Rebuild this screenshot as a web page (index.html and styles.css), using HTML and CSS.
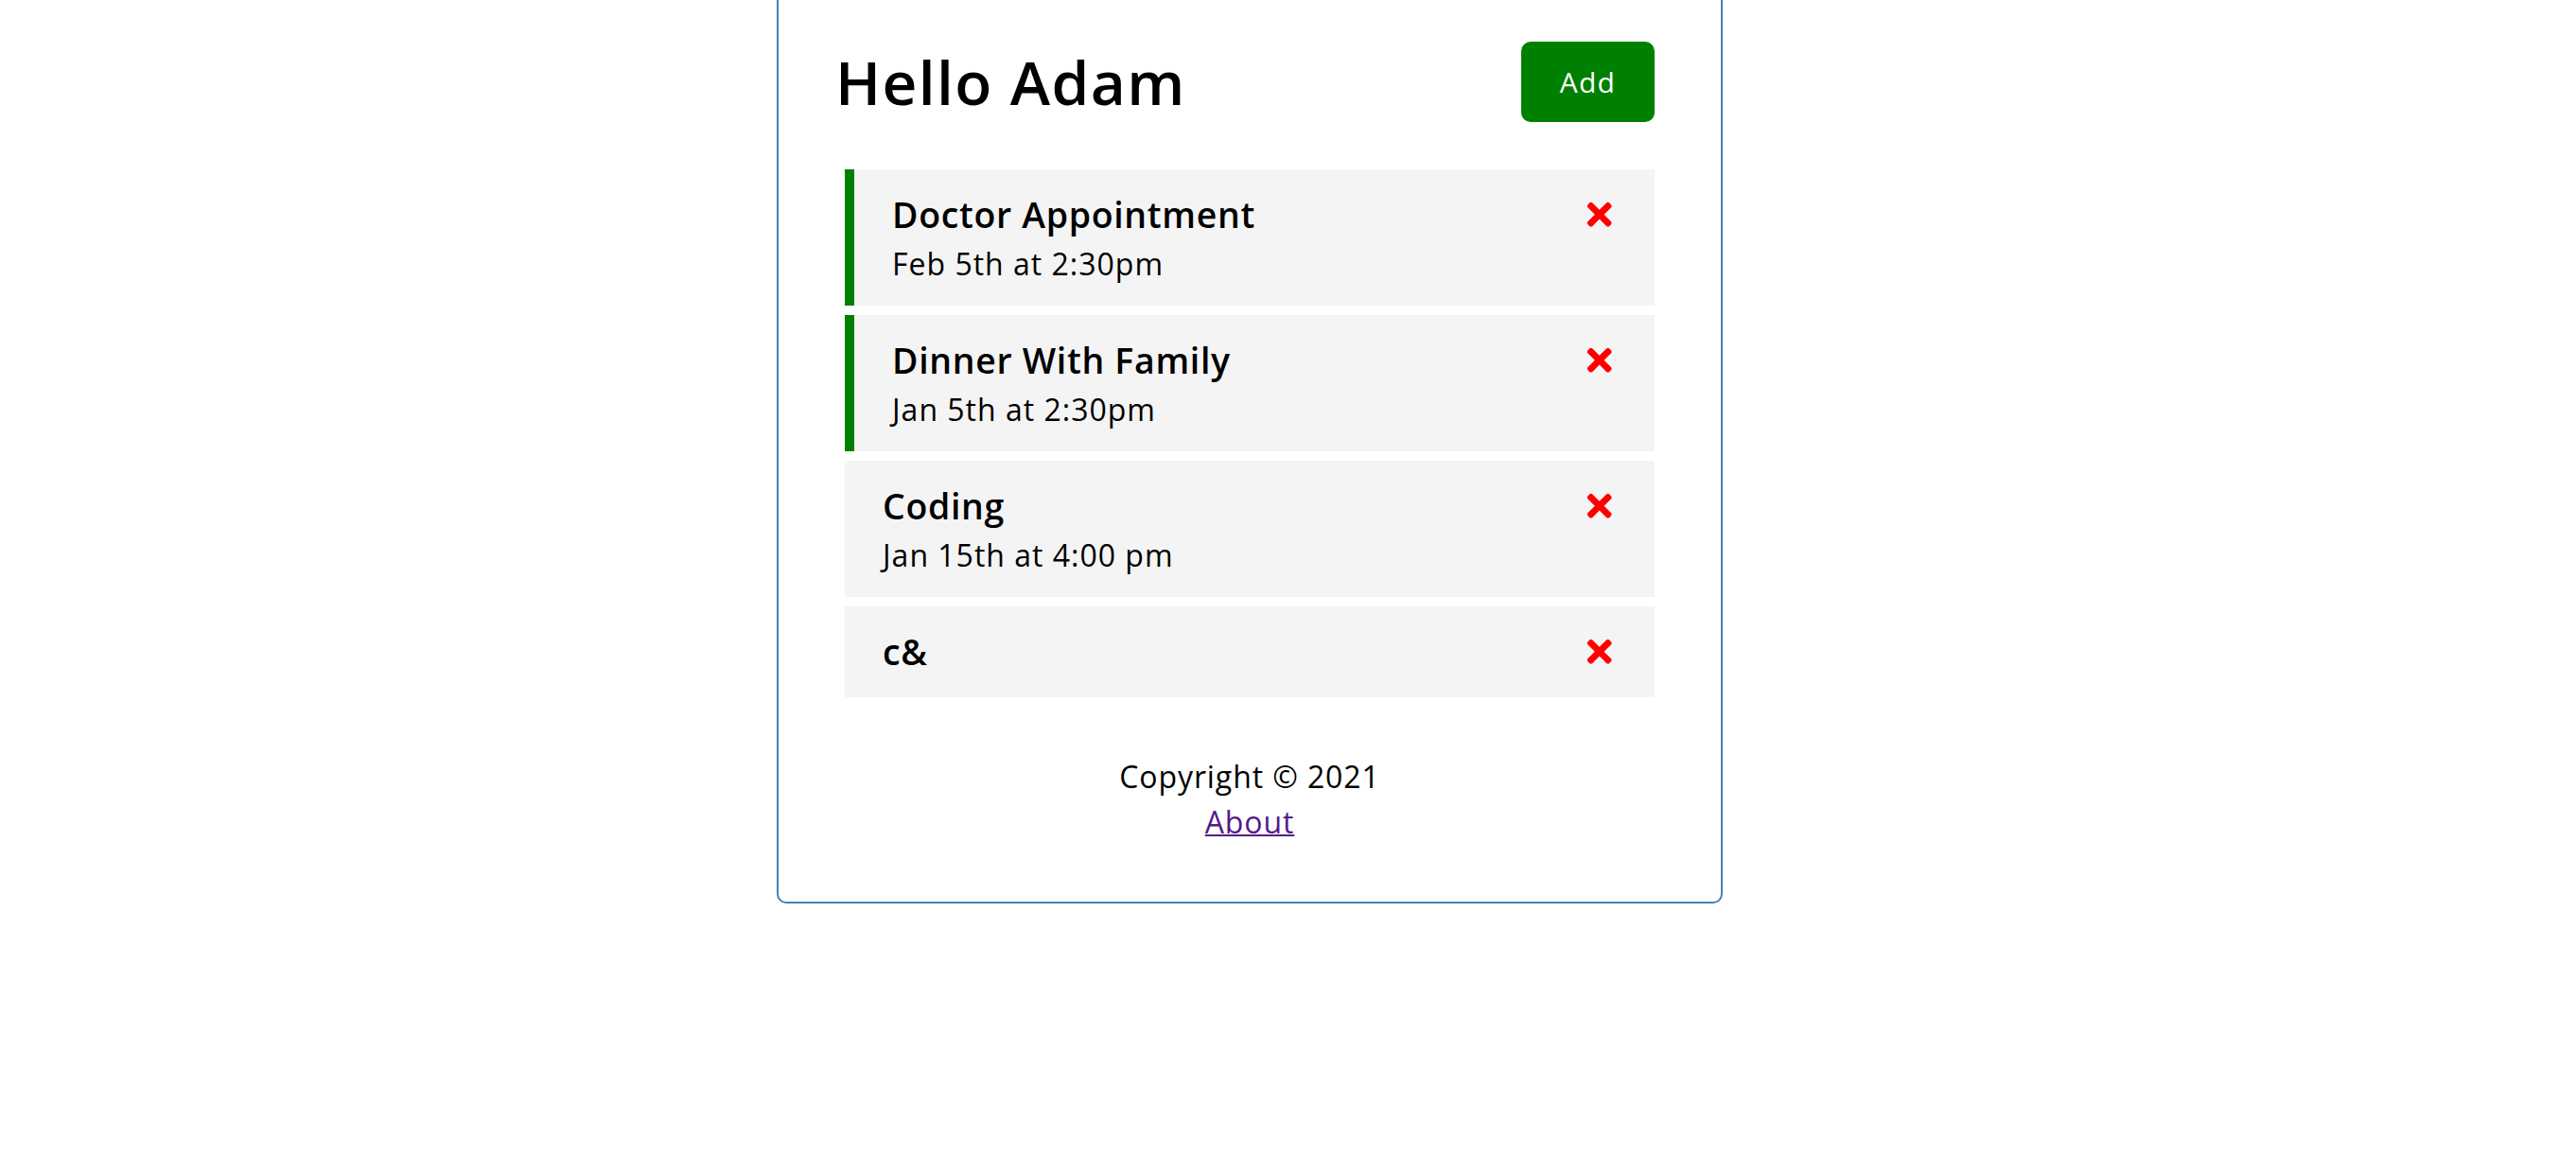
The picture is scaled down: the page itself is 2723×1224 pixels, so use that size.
FILE: index.html
```html
<!DOCTYPE html>
<html lang="en">
<head>
<meta charset="utf-8">
<title>Task Tracker</title>
<link rel="stylesheet" href="styles.css">
</head>
<body>
<div class="container">
  <header class="header">
    <h1 class="title">Hello Adam</h1>
    <button class="btn btn-add">Add</button>
  </header>
  <div class="tasks">
    <div class="task reminder">
      <h3 class="task-title">Doctor Appointment <svg class="icon-delete" viewBox="0 0 352 512"><path d="M242.72 256l100.07-100.07c12.28-12.28 12.28-32.19 0-44.48l-22.24-22.24c-12.28-12.28-32.19-12.28-44.48 0L176 189.28 75.93 89.21c-12.28-12.28-32.19-12.28-44.48 0L9.21 111.45c-12.28 12.28-12.28 32.19 0 44.48L109.28 256 9.21 356.07c-12.28 12.28-12.28 32.19 0 44.48l22.24 22.24c12.28 12.28 32.2 12.28 44.48 0L176 322.72l100.07 100.07c12.28 12.28 32.2 12.28 44.48 0l22.24-22.24c12.28-12.28 12.28-32.19 0-44.48L242.72 256z"/></svg></h3>
      <p class="task-day">Feb 5th at 2:30pm</p>
    </div>
    <div class="task reminder">
      <h3 class="task-title">Dinner With Family <svg class="icon-delete" viewBox="0 0 352 512"><path d="M242.72 256l100.07-100.07c12.28-12.28 12.28-32.19 0-44.48l-22.24-22.24c-12.28-12.28-32.19-12.28-44.48 0L176 189.28 75.93 89.21c-12.28-12.28-32.19-12.28-44.48 0L9.21 111.45c-12.28 12.28-12.28 32.19 0 44.48L109.28 256 9.21 356.07c-12.28 12.28-12.28 32.19 0 44.48l22.24 22.24c12.28 12.28 32.2 12.28 44.48 0L176 322.72l100.07 100.07c12.28 12.28 32.2 12.28 44.48 0l22.24-22.24c12.28-12.28 12.28-32.19 0-44.48L242.72 256z"/></svg></h3>
      <p class="task-day">Jan 5th at 2:30pm</p>
    </div>
    <div class="task">
      <h3 class="task-title">Coding <svg class="icon-delete" viewBox="0 0 352 512"><path d="M242.72 256l100.07-100.07c12.28-12.28 12.28-32.19 0-44.48l-22.24-22.24c-12.28-12.28-32.19-12.28-44.48 0L176 189.28 75.93 89.21c-12.28-12.28-32.19-12.28-44.48 0L9.21 111.45c-12.28 12.28-12.28 32.19 0 44.48L109.28 256 9.21 356.07c-12.28 12.28-12.28 32.19 0 44.48l22.24 22.24c12.28 12.28 32.2 12.28 44.48 0L176 322.72l100.07 100.07c12.28 12.28 32.2 12.28 44.48 0l22.24-22.24c12.28-12.28 12.28-32.19 0-44.48L242.72 256z"/></svg></h3>
      <p class="task-day">Jan 15th at 4:00 pm</p>
    </div>
    <div class="task">
      <h3 class="task-title">c&amp; <svg class="icon-delete" viewBox="0 0 352 512"><path d="M242.72 256l100.07-100.07c12.28-12.28 12.28-32.19 0-44.48l-22.24-22.24c-12.28-12.28-32.19-12.28-44.48 0L176 189.28 75.93 89.21c-12.28-12.28-32.19-12.28-44.48 0L9.21 111.45c-12.28 12.28-12.28 32.19 0 44.48L109.28 256 9.21 356.07c-12.28 12.28-12.28 32.19 0 44.48l22.24 22.24c12.28 12.28 32.2 12.28 44.48 0L176 322.72l100.07 100.07c12.28 12.28 32.2 12.28 44.48 0l22.24-22.24c12.28-12.28 12.28-32.19 0-44.48L242.72 256z"/></svg></h3>
    </div>
  </div>
  <footer class="footer">
    <p class="copyright">Copyright &copy; 2021</p>
    <a class="footer-link" href="#about">About</a>
  </footer>
</div>
</body>
</html>
```

FILE: styles.css
```css
* {
  box-sizing: border-box;
  margin: 0;
  padding: 0;
}

body {
  font-family: "Open Sans", "Noto Sans", sans-serif;
  color: #000;
  background: #fff;
}

.container {
  width: 1000px;
  margin: -28px 0 0 821px;
  min-height: 600px;
  overflow: auto;
  border: 2px solid steelblue;
  border-radius: 10px;
  padding: 60px;
}

.header {
  display: flex;
  justify-content: space-between;
  align-items: center;
  margin-bottom: 40px;
}

.title {
  font-size: 64px;
  line-height: 96px;
  font-weight: 600;
  letter-spacing: 1.4px;
}

.btn {
  display: inline-block;
  background: #008000;
  color: #fff;
  border: none;
  padding: 20px 41px;
  margin: 10px;
  border-radius: 10px;
  font-family: inherit;
  font-size: 30px;
  line-height: 45px;
  letter-spacing: 1.2px;
  cursor: pointer;
}

.task {
  background: #f4f4f4;
  margin: 10px;
  padding: 20px 40px;
  cursor: pointer;
}

.task.reminder {
  border-left: 10px solid #008000;
}

.task-title {
  display: flex;
  justify-content: space-between;
  align-items: center;
  font-size: 37.44px;
  line-height: 56px;
  font-weight: 600;
  letter-spacing: 0.7px;
}

.icon-delete {
  width: 1em;
  height: 1em;
  fill: #f00;
  flex: none;
}

.task-day {
  font-size: 32px;
  line-height: 48px;
  font-weight: 400;
  letter-spacing: 1px;
}

.footer {
  margin-top: 60px;
  text-align: center;
  font-size: 32px;
  line-height: 48px;
  letter-spacing: 0.9px;
}

.footer-link {
  color: #551a8b;
  text-decoration: underline;
  text-decoration-thickness: 2px;
}
```
